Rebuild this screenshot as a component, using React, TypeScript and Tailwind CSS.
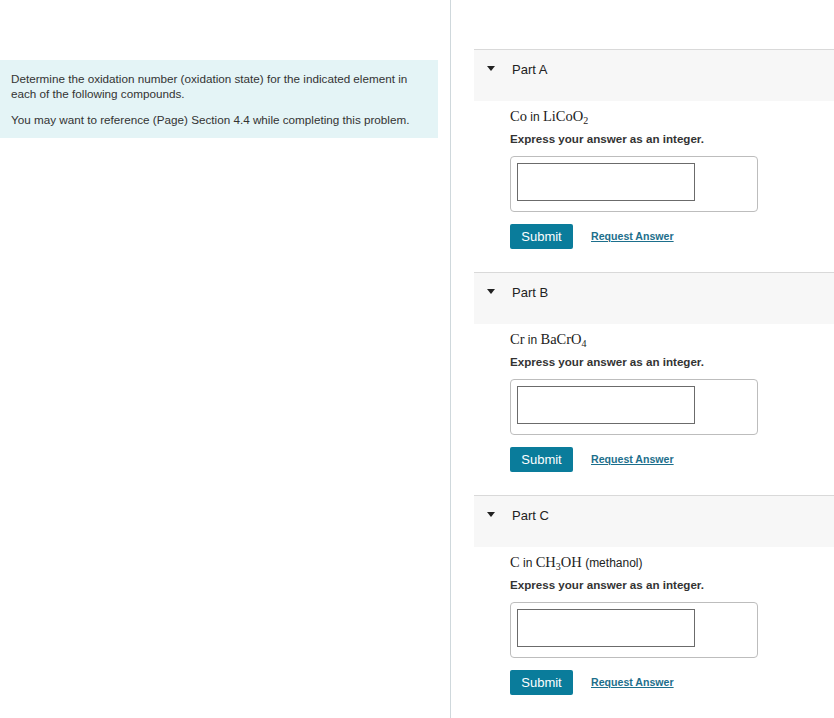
const parts = [
  {
    label: "Part A",
    prompt: (
      <>
        <span className="font-['Liberation_Serif',serif] text-[14.5px]">Co</span>
        <span className="text-[12px]"> in </span>
        <span className="font-['Liberation_Serif',serif] text-[14.5px]">
          LiCoO<sub className="text-[10px]">2</sub>
        </span>
      </>
    ),
  },
  {
    label: "Part B",
    prompt: (
      <>
        <span className="font-['Liberation_Serif',serif] text-[14.5px]">Cr</span>
        <span className="text-[12px]"> in </span>
        <span className="font-['Liberation_Serif',serif] text-[14.5px]">
          BaCrO<sub className="text-[10px]">4</sub>
        </span>
      </>
    ),
  },
  {
    label: "Part C",
    prompt: (
      <>
        <span className="font-['Liberation_Serif',serif] text-[14.5px]">C</span>
        <span className="text-[12px]"> in </span>
        <span className="font-['Liberation_Serif',serif] text-[14.5px]">
          CH<sub className="text-[10px]">3</sub>OH
        </span>
        <span className="text-[12px]"> (methanol)</span>
      </>
    ),
  },
];

function PartBlock({ label, prompt }: { label: string; prompt: React.ReactNode }) {
  return (
    <section className="mb-[23px]">
      <div className="h-[52px] bg-[#f7f7f7] border-t border-[#d9d9d9] flex items-start pt-[10px] pl-[13px]">
        <svg width="8" height="5" viewBox="0 0 8 5" className="mt-[6px]">
          <path d="M0 0 L8 0 L4 5 Z" fill="#222" />
        </svg>
        <span className="ml-[17px] text-[13px] text-[#222]">{label}</span>
      </div>
      <div className="pl-[36px]">
        <div className="mt-[6px] h-[18px] leading-[18px] text-[#222]">{prompt}</div>
        <p className="mt-[6px] text-[11.6px] leading-[15px] font-bold text-[#333]">
          Express your answer as an integer.
        </p>
        <div className="mt-[10px] w-[248px] h-[56px] rounded-[4px] border border-[#bdbdbd] p-[6px]">
          <div className="w-[178px] h-[38px] border border-[#6b6b6b] bg-white" />
        </div>
        <div className="mt-[12px] flex items-center">
          <button className="w-[63px] h-[25px] rounded-[2px] bg-[#0a7c9b] text-white text-[13px]">
            Submit
          </button>
          <a href="#" className="ml-[18px] text-[10.6px] font-bold text-[#1d6f8c] underline">
            Request Answer
          </a>
        </div>
      </div>
    </section>
  );
}

export default function App() {
  return (
    <div className="w-[834px] h-[718px] bg-white flex font-['Liberation_Sans',Arial,sans-serif] overflow-hidden">
      <div className="w-[451px] shrink-0 border-r border-[#cfd8dc]">
        <div className="mt-[60px] w-[438px] bg-[#e4f4f6] px-[11px] pt-[11px] pb-[11px] text-[11.7px] leading-[15px] text-[#333]">
          <p>
            Determine the oxidation number (oxidation state) for the indicated element in each of the
            following compounds.
          </p>
          <p className="mt-[11px]">You may want to reference (Page) Section 4.4 while completing this problem.</p>
        </div>
      </div>
      <div className="flex-1 pl-[23px] pt-[49px]">
        {parts.map((p) => (
          <PartBlock key={p.label} label={p.label} prompt={p.prompt} />
        ))}
      </div>
    </div>
  );
}
